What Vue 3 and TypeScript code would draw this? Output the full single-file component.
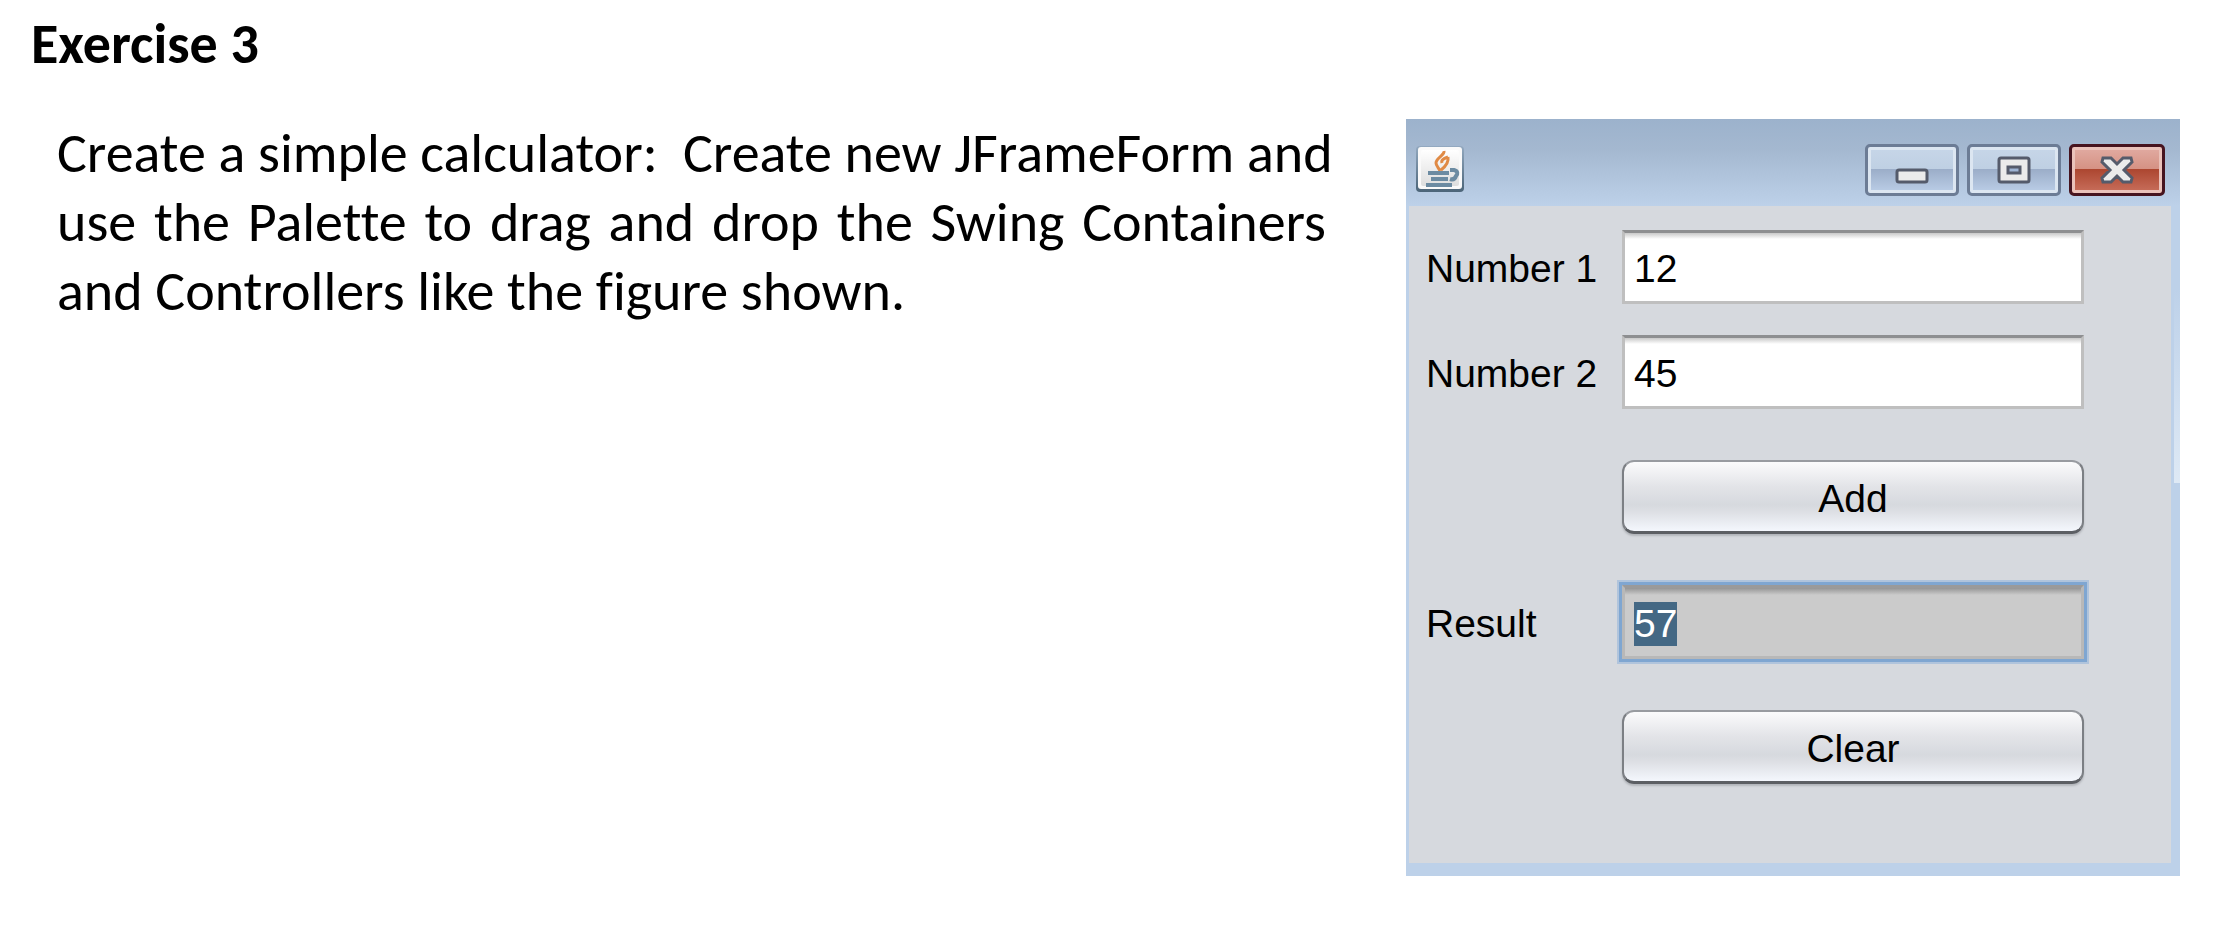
<script setup lang="ts">
import { onMounted, ref } from 'vue'

const instructions: string[] = [
  'Create a simple calculator:\u00a0 Create new JFrameForm and',
  'use the Palette to drag and drop the Swing Containers',
  'and Controllers like the figure shown.',
]

const first = ref('12')
const second = ref('45')
const result = ref('57')
const resultField = ref<HTMLInputElement | null>(null)

function selectResult(): void {
  resultField.value?.focus()
  resultField.value?.select()
}

function add(): void {
  result.value = String(Number(first.value) + Number(second.value))
  requestAnimationFrame(selectResult)
}

function clear(): void {
  first.value = ''
  second.value = ''
  result.value = ''
}

onMounted(selectResult)
</script>

<template>
  <main class="page">
    <h1 class="title">Exercise 3</h1>
    <div class="exercise">
      <p class="instructions">
        <span v-for="line in instructions" :key="line" class="line">{{ line }}</span>
      </p>
      <section class="window" aria-label="Calculator">
        <header class="titlebar">
          <svg class="java" viewBox="0 0 48 46" aria-hidden="true">
            <defs>
              <linearGradient id="tile" x1="0" y1="0" x2="0" y2="1">
                <stop offset="0" stop-color="#ffffff" />
                <stop offset="1" stop-color="#dedede" />
              </linearGradient>
              <linearGradient id="rim" x1="0" y1="0" x2="0" y2="1">
                <stop offset="0" stop-color="#93a9c0" />
                <stop offset="1" stop-color="#4b6478" />
              </linearGradient>
            </defs>
            <rect width="48" height="46" rx="4" fill="url(#rim)" />
            <rect x="2" y="1" width="44" height="42" rx="3" fill="#fafafa" />
            <rect x="5" y="4" width="38" height="36" rx="2" fill="url(#tile)" />
            <path
              d="M28 5c1 4-8 7-8 12 0 3 3 5 4 8M32 11c-5 2-7 3-6 6M32 11c1 5-2 9-7 13"
              fill="none"
              stroke="#e08a45"
              stroke-width="3"
            />
            <path
              d="M12 27h21M15 33h17M10 39h26"
              fill="none"
              stroke="#6c8ba2"
              stroke-width="4"
            />
            <path
              d="M34 24h4c4 1 4 4 2 6-1 3-3 4-6 3"
              fill="none"
              stroke="#6c8ba2"
              stroke-width="4"
            />
          </svg>
          <div class="controls">
            <button class="control" type="button" aria-label="Minimize">
              <svg viewBox="0 0 34 28" aria-hidden="true">
                <rect x="2" y="14" width="30" height="12" rx="2" class="glyph" />
              </svg>
            </button>
            <button class="control" type="button" aria-label="Maximize">
              <svg viewBox="0 0 34 28" aria-hidden="true">
                <rect x="2" y="2" width="30" height="24" rx="2" class="glyph" />
                <rect x="11" y="11" width="12" height="6" class="hole" />
              </svg>
            </button>
            <button class="control close" type="button" aria-label="Close">
              <svg viewBox="0 0 34 28" aria-hidden="true">
                <path
                  d="M3 2h8l6 6 6-6h8l1 4-8 8 8 8-1 4h-8l-6-6-6 6H3l-1-4 8-8-8-8z"
                  class="glyph"
                />
              </svg>
            </button>
          </div>
        </header>
        <form class="form" @submit.prevent="add">
          <div class="row">
            <label for="first">Number 1</label>
            <input id="first" v-model="first" class="field" type="text" />
          </div>
          <div class="row">
            <label for="second">Number 2</label>
            <input id="second" v-model="second" class="field" type="text" />
          </div>
          <div class="row spaced">
            <button class="action" type="submit">Add</button>
          </div>
          <div class="row spaced">
            <label for="result">Result</label>
            <input
              id="result"
              ref="resultField"
              v-model="result"
              class="field result"
              type="text"
              readonly
            />
          </div>
          <div class="row spaced">
            <button class="action" type="button" @click="clear">Clear</button>
          </div>
        </form>
      </section>
    </div>
  </main>
</template>

<style>
body {
  margin: 0;
  background: #fff;
}
</style>

<style scoped>
.page {
  padding: 12px 50px 58px 31px;
  color: #000;
  font-family: Carlito, Calibri, Lato, sans-serif;
  font-size: 56px;
  font-variant-ligatures: none;
}
.title {
  margin: 0;
  font-size: 56px;
  line-height: 64px;
  font-weight: 700;
}
.exercise {
  display: grid;
  grid-template-columns: minmax(0, 1269fr) minmax(0, 774fr);
  gap: 80px;
  align-items: start;
  padding: 43px 0 0 26px;
}
.instructions {
  margin: 0;
  line-height: 69px;
}
.line {
  display: block;
  white-space: nowrap;
  text-align: justify;
  text-align-last: justify;
}
.line:last-child {
  text-align-last: left;
}
.window {
  position: relative;
  box-sizing: border-box;
  border: solid #bdd1e9;
  border-width: 0 9px 13px 3px;
  background: #d6d9de;
  font-family: 'Liberation Sans', Arial, sans-serif;
}
/* Light reflection along the right edge of the frame */
.window::after {
  content: '';
  position: absolute;
  top: 87px;
  right: -9px;
  width: 6px;
  height: 277px;
  background: linear-gradient(#bdd1e9 30%, #dee9f5);
}
.titlebar {
  display: flex;
  justify-content: space-between;
  align-items: flex-start;
  box-sizing: border-box;
  height: 87px;
  margin: 0 -9px 0 -3px;
  padding: 25px 15px 0 10px;
  background: linear-gradient(#9cb2cc, #a4b8d0 35%, #bdd1e9);
}
.java {
  width: 48px;
  height: 46px;
  margin-top: 2px;
}
.controls {
  display: flex;
  gap: 8px;
}
.control {
  display: grid;
  place-items: center;
  box-sizing: border-box;
  width: 94px;
  height: 52px;
  padding: 0;
  border: 3px solid #6c7c95;
  border-radius: 5px;
  background: linear-gradient(#c7d6e8, #bfd0e3 47%, #9badc8 48%, #bccfe8);
  box-shadow: inset 0 0 0 3px #dce6f1;
}
.control svg {
  width: 34px;
  height: 28px;
}
.close {
  width: 96px;
  border-color: #46141f;
  background: linear-gradient(#e2aca3, #d59284 47%, #ac4630 48%, #c9705d);
  box-shadow: inset 0 0 0 3px #eac2ba;
}
.glyph {
  fill: #ebebeb;
  stroke: #555b6b;
  stroke-width: 3px;
}
.hole {
  fill: #9eb4d4;
  stroke: #555b6b;
  stroke-width: 3px;
}
.form {
  display: flex;
  flex-direction: column;
  gap: 31px;
  padding: 24px 87px 79px 17px;
  font-size: 39px;
  line-height: 48px;
}
.row {
  display: grid;
  grid-template-columns: 196px minmax(0, 1fr);
  align-items: center;
}
.spaced {
  margin-top: 20px;
}
.row label {
  padding-top: 4px;
}
.field,
.action {
  box-sizing: border-box;
  width: 100%;
  height: 74px;
  margin: 0;
  color: #000;
  font: inherit;
}
.field {
  padding: 4px 9px 0;
  border: 3px solid #bfbfbf;
  border-top-color: #8e8f91;
  border-radius: 0;
  background: linear-gradient(#c9c9c9, #fff 6px);
  outline: none;
}
.result {
  border-color: #9a9a9a #b8b8b8 #b8b8b8;
  background: linear-gradient(#959595, #cbcbcb 7px);
  box-shadow:
    0 0 0 3px #7fa6d1,
    0 0 0 5px #b0c4dc;
}
.field::selection {
  background: #446884;
  color: #fff;
}
.action {
  grid-column: 2;
  padding: 4px 0 0;
  border: 2px solid;
  border-color: #989ba0 #7c7f84 #5c5f64;
  border-bottom-width: 3px;
  border-radius: 12px;
  background: linear-gradient(#fbfbfc, #e3e4e8 35%, #d6d9de 62%, #dddfe4 72%, #f4f7fd);
  box-shadow: 0 2px 2px #b3b6bb;
}
</style>
